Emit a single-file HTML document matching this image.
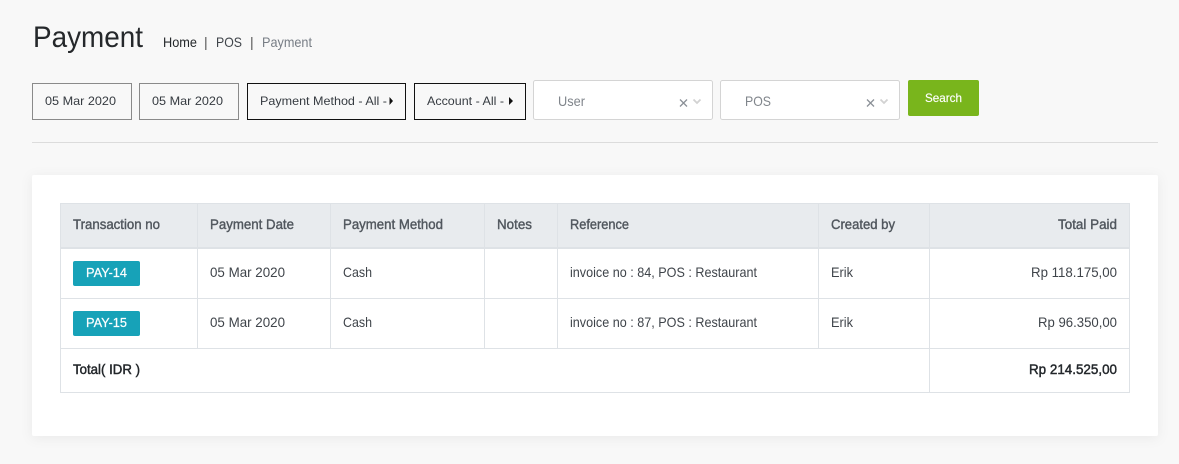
<!DOCTYPE html>
<html>
<head>
<meta charset="utf-8">
<style>
html,body{margin:0;padding:0;background:#f8f8f8;width:1179px;height:464px;overflow:hidden}
svg{display:block}
text{font-family:"Liberation Sans",sans-serif;font-size:14px;fill:#3f444a}
.h{fill:#51575e;stroke:#51575e;stroke-width:.4px}
.b{fill:#23272b;stroke:#23272b;stroke-width:.45px}
.f{font-size:12px;fill:#363b41}
.s{font-size:14px;fill:#80858b}
</style>
</head>
<body>
<svg width="1179" height="464" viewBox="0 0 1179 464" xmlns="http://www.w3.org/2000/svg">
<defs>
<filter id="sh" x="-5%" y="-15%" width="110%" height="130%"><feDropShadow dx="0" dy="2" stdDeviation="6" flood-color="#000" flood-opacity=".06"/></filter>
</defs>
<rect width="1179" height="464" fill="#f8f8f8"/>

<text x="33" y="47" style="font-size:30px;fill:#25282b" textLength="110" lengthAdjust="spacingAndGlyphs">Payment</text>
<text x="163" y="47" style="fill:#25282b" textLength="34" lengthAdjust="spacingAndGlyphs">Home</text>
<text x="204" y="47" style="fill:#555">|</text>
<text x="216" y="47" style="fill:#3f444a" textLength="26" lengthAdjust="spacingAndGlyphs">POS</text>
<text x="250" y="47" style="fill:#555">|</text>
<text x="262" y="47" style="fill:#777d85" textLength="50" lengthAdjust="spacingAndGlyphs">Payment</text>

<rect x="32.5" y="83.5" width="99" height="36" fill="none" stroke="#8a8a8a"/>
<text class="f" x="45" y="105" textLength="71" lengthAdjust="spacingAndGlyphs">05 Mar 2020</text>
<rect x="139.5" y="83.5" width="99" height="36" fill="none" stroke="#8a8a8a"/>
<text class="f" x="152" y="105" textLength="71" lengthAdjust="spacingAndGlyphs">05 Mar 2020</text>
<rect x="247.5" y="83.5" width="158" height="36" fill="none" stroke="#111"/>
<text class="f" x="260" y="105" textLength="127" lengthAdjust="spacingAndGlyphs">Payment Method - All -</text>
<path d="M389.500 97l3.500 4-3.500 4z" fill="#111"/>
<rect x="414.5" y="83.5" width="111" height="36" fill="none" stroke="#111"/>
<text class="f" x="427" y="105" textLength="77" lengthAdjust="spacingAndGlyphs">Account - All -</text>
<path d="M509 97l4 4-4 4z" fill="#111"/>

<rect x="533.5" y="80.5" width="179" height="39" rx="2" fill="#fff" stroke="#d4d4d4"/>
<text class="s" x="558" y="106" textLength="27" lengthAdjust="spacingAndGlyphs">User</text>
<path d="M680 99.500l7 7M687 99.500l-7 7" stroke="#8b9097" stroke-width="1.300" fill="none"/>
<path d="M693.500 99.500l3.500 3.500 3.500-3.500" stroke="#d2d2d2" stroke-width="1.800" fill="none"/>

<rect x="720.5" y="80.5" width="179" height="39" rx="2" fill="#fff" stroke="#d4d4d4"/>
<text class="s" x="745" y="106" textLength="26" lengthAdjust="spacingAndGlyphs">POS</text>
<path d="M867 99.500l7 7M874 99.500l-7 7" stroke="#8b9097" stroke-width="1.300" fill="none"/>
<path d="M880.500 99.500l3.500 3.500 3.500-3.500" stroke="#d2d2d2" stroke-width="1.800" fill="none"/>

<rect x="908" y="80" width="71" height="36" rx="2" fill="#79b51c"/>
<text x="925" y="102" style="font-size:12px;fill:#fff;stroke:#fff;stroke-width:.15px" textLength="37" lengthAdjust="spacingAndGlyphs">Search</text>

<rect x="32" y="142" width="1126" height="1" fill="#dcdcdc"/>

<rect x="32" y="175" width="1126" height="261" rx="2" fill="#fff" filter="url(#sh)"/>

<rect x="60" y="203" width="1070" height="45" fill="#e8ebee"/>
<g fill="#dee2e6">
<rect x="60" y="203" width="1070" height="1"/>
<rect x="60" y="247" width="1070" height="2"/>
<rect x="60" y="298" width="1070" height="1"/>
<rect x="60" y="348" width="1070" height="1"/>
<rect x="60" y="392" width="1070" height="1"/>
<rect x="60" y="203" width="1" height="190"/>
<rect x="1129" y="203" width="1" height="190"/>
<rect x="929" y="203" width="1" height="190"/>
<rect x="197" y="203" width="1" height="145"/>
<rect x="330" y="203" width="1" height="145"/>
<rect x="484" y="203" width="1" height="145"/>
<rect x="557" y="203" width="1" height="145"/>
<rect x="818" y="203" width="1" height="145"/>
</g>

<text class="h" x="73" y="229" textLength="87" lengthAdjust="spacingAndGlyphs">Transaction no</text>
<text class="h" x="210" y="229" textLength="84" lengthAdjust="spacingAndGlyphs">Payment Date</text>
<text class="h" x="343" y="229" textLength="100" lengthAdjust="spacingAndGlyphs">Payment Method</text>
<text class="h" x="497" y="229" textLength="35" lengthAdjust="spacingAndGlyphs">Notes</text>
<text class="h" x="570" y="229" textLength="59" lengthAdjust="spacingAndGlyphs">Reference</text>
<text class="h" x="831" y="229" textLength="64" lengthAdjust="spacingAndGlyphs">Created by</text>
<text class="h" x="1058" y="229" textLength="59" lengthAdjust="spacingAndGlyphs">Total Paid</text>

<rect x="73" y="261" width="67" height="25" rx="2" fill="#17a2b8"/>
<text x="86" y="277" style="font-size:12.500px;fill:#fff;stroke:#fff;stroke-width:.2px" textLength="41" lengthAdjust="spacingAndGlyphs">PAY-14</text>
<text x="210" y="277" textLength="75" lengthAdjust="spacingAndGlyphs">05 Mar 2020</text>
<text x="343" y="277" textLength="29" lengthAdjust="spacingAndGlyphs">Cash</text>
<text x="570" y="277" textLength="187" lengthAdjust="spacingAndGlyphs">invoice no : 84, POS : Restaurant</text>
<text x="831" y="277" textLength="22" lengthAdjust="spacingAndGlyphs">Erik</text>
<text x="1031" y="277" textLength="86" lengthAdjust="spacingAndGlyphs">Rp 118.175,00</text>

<rect x="73" y="311" width="67" height="25" rx="2" fill="#17a2b8"/>
<text x="86" y="327" style="font-size:12.500px;fill:#fff;stroke:#fff;stroke-width:.2px" textLength="41" lengthAdjust="spacingAndGlyphs">PAY-15</text>
<text x="210" y="327" textLength="75" lengthAdjust="spacingAndGlyphs">05 Mar 2020</text>
<text x="343" y="327" textLength="29" lengthAdjust="spacingAndGlyphs">Cash</text>
<text x="570" y="327" textLength="187" lengthAdjust="spacingAndGlyphs">invoice no : 87, POS : Restaurant</text>
<text x="831" y="327" textLength="22" lengthAdjust="spacingAndGlyphs">Erik</text>
<text x="1038" y="327" textLength="79" lengthAdjust="spacingAndGlyphs">Rp 96.350,00</text>

<text class="b" x="73" y="374" textLength="67" lengthAdjust="spacingAndGlyphs">Total( IDR )</text>
<text class="b" x="1029" y="374" textLength="88" lengthAdjust="spacingAndGlyphs">Rp 214.525,00</text>
</svg>
</body>
</html>
